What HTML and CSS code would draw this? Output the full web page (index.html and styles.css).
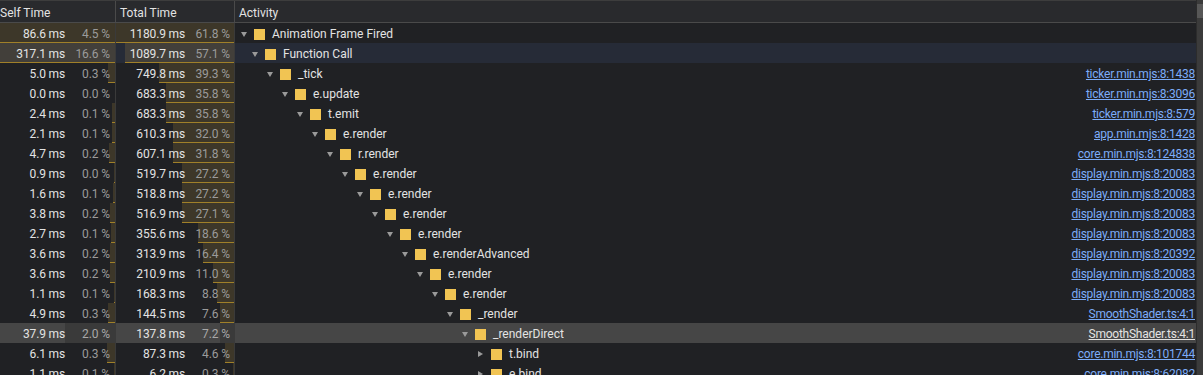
FILE: index.html
```html
<!DOCTYPE html>
<html lang="en">
<head>
    <meta charset="UTF-8">
    <title>Call Tree</title>
    <link rel="stylesheet" href="styles.css">
</head>
<body>
    <div class="panel">
        <div class="tree">
            <div class="head">
                <div class="hcell self">Self Time</div>
                <div class="hcell total">Total Time</div>
                <div class="hcell activity">Activity</div>
            </div>

            <div class="row">
                <div class="cell self"><span class="bar" style="width:100%"></span><span class="val">86.6 ms</span><span class="pct">4.5 %</span></div>
                <div class="cell total"><span class="bar" style="width:100%"></span><span class="val">1180.9 ms</span><span class="pct">61.8 %</span></div>
                <div class="cell activity" style="padding-left:6px"><span class="tri"></span><span class="swatch"></span><span class="name">Animation Frame Fired</span></div>
            </div>
            <div class="row hover">
                <div class="cell self"><span class="bar" style="width:100%"></span><span class="val">317.1 ms</span><span class="pct">16.6 %</span></div>
                <div class="cell total"><span class="bar" style="width:92.3%"></span><span class="val">1089.7 ms</span><span class="pct">57.1 %</span></div>
                <div class="cell activity" style="padding-left:17px"><span class="tri"></span><span class="swatch"></span><span class="name">Function Call</span></div>
            </div>
            <div class="row">
                <div class="cell self"><span class="bar" style="width:5.8%"></span><span class="val">5.0 ms</span><span class="pct">0.3 %</span></div>
                <div class="cell total"><span class="bar" style="width:63.5%"></span><span class="val">749.8 ms</span><span class="pct">39.3 %</span></div>
                <div class="cell activity" style="padding-left:32px"><span class="tri"></span><span class="swatch"></span><span class="name">_tick</span><a class="src">ticker.min.mjs:8:1438</a></div>
            </div>
            <div class="row">
                <div class="cell self"><span class="bar" style="width:0%"></span><span class="val">0.0 ms</span><span class="pct">0.0 %</span></div>
                <div class="cell total"><span class="bar" style="width:57.9%"></span><span class="val">683.3 ms</span><span class="pct">35.8 %</span></div>
                <div class="cell activity" style="padding-left:47px"><span class="tri"></span><span class="swatch"></span><span class="name">e.update</span><a class="src">ticker.min.mjs:8:3096</a></div>
            </div>
            <div class="row">
                <div class="cell self"><span class="bar" style="width:2.8%"></span><span class="val">2.4 ms</span><span class="pct">0.1 %</span></div>
                <div class="cell total"><span class="bar" style="width:57.9%"></span><span class="val">683.3 ms</span><span class="pct">35.8 %</span></div>
                <div class="cell activity" style="padding-left:62px"><span class="tri"></span><span class="swatch"></span><span class="name">t.emit</span><a class="src">ticker.min.mjs:8:579</a></div>
            </div>
            <div class="row">
                <div class="cell self"><span class="bar" style="width:2.4%"></span><span class="val">2.1 ms</span><span class="pct">0.1 %</span></div>
                <div class="cell total"><span class="bar" style="width:51.7%"></span><span class="val">610.3 ms</span><span class="pct">32.0 %</span></div>
                <div class="cell activity" style="padding-left:77px"><span class="tri"></span><span class="swatch"></span><span class="name">e.render</span><a class="src">app.min.mjs:8:1428</a></div>
            </div>
            <div class="row">
                <div class="cell self"><span class="bar" style="width:5.4%"></span><span class="val">4.7 ms</span><span class="pct">0.2 %</span></div>
                <div class="cell total"><span class="bar" style="width:51.4%"></span><span class="val">607.1 ms</span><span class="pct">31.8 %</span></div>
                <div class="cell activity" style="padding-left:92px"><span class="tri"></span><span class="swatch"></span><span class="name">r.render</span><a class="src">core.min.mjs:8:124838</a></div>
            </div>
            <div class="row">
                <div class="cell self"><span class="bar" style="width:1%"></span><span class="val">0.9 ms</span><span class="pct">0.0 %</span></div>
                <div class="cell total"><span class="bar" style="width:44%"></span><span class="val">519.7 ms</span><span class="pct">27.2 %</span></div>
                <div class="cell activity" style="padding-left:107px"><span class="tri"></span><span class="swatch"></span><span class="name">e.render</span><a class="src">display.min.mjs:8:20083</a></div>
            </div>
            <div class="row">
                <div class="cell self"><span class="bar" style="width:1.8%"></span><span class="val">1.6 ms</span><span class="pct">0.1 %</span></div>
                <div class="cell total"><span class="bar" style="width:43.9%"></span><span class="val">518.8 ms</span><span class="pct">27.2 %</span></div>
                <div class="cell activity" style="padding-left:122px"><span class="tri"></span><span class="swatch"></span><span class="name">e.render</span><a class="src">display.min.mjs:8:20083</a></div>
            </div>
            <div class="row">
                <div class="cell self"><span class="bar" style="width:4.4%"></span><span class="val">3.8 ms</span><span class="pct">0.2 %</span></div>
                <div class="cell total"><span class="bar" style="width:43.8%"></span><span class="val">516.9 ms</span><span class="pct">27.1 %</span></div>
                <div class="cell activity" style="padding-left:137px"><span class="tri"></span><span class="swatch"></span><span class="name">e.render</span><a class="src">display.min.mjs:8:20083</a></div>
            </div>
            <div class="row">
                <div class="cell self"><span class="bar" style="width:3.1%"></span><span class="val">2.7 ms</span><span class="pct">0.1 %</span></div>
                <div class="cell total"><span class="bar" style="width:30.1%"></span><span class="val">355.6 ms</span><span class="pct">18.6 %</span></div>
                <div class="cell activity" style="padding-left:152px"><span class="tri"></span><span class="swatch"></span><span class="name">e.render</span><a class="src">display.min.mjs:8:20083</a></div>
            </div>
            <div class="row">
                <div class="cell self"><span class="bar" style="width:4.2%"></span><span class="val">3.6 ms</span><span class="pct">0.2 %</span></div>
                <div class="cell total"><span class="bar" style="width:26.6%"></span><span class="val">313.9 ms</span><span class="pct">16.4 %</span></div>
                <div class="cell activity" style="padding-left:167px"><span class="tri"></span><span class="swatch"></span><span class="name">e.renderAdvanced</span><a class="src">display.min.mjs:8:20392</a></div>
            </div>
            <div class="row">
                <div class="cell self"><span class="bar" style="width:4.2%"></span><span class="val">3.6 ms</span><span class="pct">0.2 %</span></div>
                <div class="cell total"><span class="bar" style="width:17.9%"></span><span class="val">210.9 ms</span><span class="pct">11.0 %</span></div>
                <div class="cell activity" style="padding-left:182px"><span class="tri"></span><span class="swatch"></span><span class="name">e.render</span><a class="src">display.min.mjs:8:20083</a></div>
            </div>
            <div class="row">
                <div class="cell self"><span class="bar" style="width:1.3%"></span><span class="val">1.1 ms</span><span class="pct">0.1 %</span></div>
                <div class="cell total"><span class="bar" style="width:14.3%"></span><span class="val">168.3 ms</span><span class="pct">8.8 %</span></div>
                <div class="cell activity" style="padding-left:197px"><span class="tri"></span><span class="swatch"></span><span class="name">e.render</span><a class="src">display.min.mjs:8:20083</a></div>
            </div>
            <div class="row">
                <div class="cell self"><span class="bar" style="width:5.7%"></span><span class="val">4.9 ms</span><span class="pct">0.3 %</span></div>
                <div class="cell total"><span class="bar" style="width:12.2%"></span><span class="val">144.5 ms</span><span class="pct">7.6 %</span></div>
                <div class="cell activity" style="padding-left:212px"><span class="tri"></span><span class="swatch"></span><span class="name">_render</span><a class="src">SmoothShader.ts:4:1</a></div>
            </div>
            <div class="row selected">
                <div class="cell self"><span class="bar" style="width:43.8%"></span><span class="val">37.9 ms</span><span class="pct">2.0 %</span></div>
                <div class="cell total"><span class="bar" style="width:11.7%"></span><span class="val">137.8 ms</span><span class="pct">7.2 %</span></div>
                <div class="cell activity" style="padding-left:227px"><span class="tri"></span><span class="swatch"></span><span class="name">_renderDirect</span><a class="src">SmoothShader.ts:4:1</a></div>
            </div>
            <div class="row">
                <div class="cell self"><span class="bar" style="width:7%"></span><span class="val">6.1 ms</span><span class="pct">0.3 %</span></div>
                <div class="cell total"><span class="bar" style="width:7.4%"></span><span class="val">87.3 ms</span><span class="pct">4.6 %</span></div>
                <div class="cell activity" style="padding-left:242px"><span class="tri closed"></span><span class="swatch"></span><span class="name">t.bind</span><a class="src">core.min.mjs:8:101744</a></div>
            </div>
            <div class="row">
                <div class="cell self"><span class="bar" style="width:1.3%"></span><span class="val">1.1 ms</span><span class="pct">0.1 %</span></div>
                <div class="cell total"><span class="bar" style="width:0.5%"></span><span class="val">6.2 ms</span><span class="pct">0.3 %</span></div>
                <div class="cell activity" style="padding-left:242px"><span class="tri closed"></span><span class="swatch"></span><span class="name">e.bind</span><a class="src">core.min.mjs:8:62082</a></div>
            </div>
        </div>
        <div class="scrollbar"><div class="thumb"></div></div>
    </div>
</body>
</html>
```

FILE: styles.css
```css
body {
    margin: 0;
    background: #202124;
    color: #e3e3e3;
    font-family: Roboto, 'Noto Sans', Arial, sans-serif;
    font-size: 12px;
    height: 375px;
    overflow: hidden;
}
.panel {
    display: flex;
    height: 375px;
}
.tree {
    flex: 1;
    min-width: 0;
}
.head {
    display: grid;
    grid-template-columns: 116px 119px 1fr;
    height: 21px;
    background: #292a2d;
    border-top: 1px solid #3d3d3d;
    border-bottom: 1px solid #4a4a4a;
}
.hcell {
    line-height: 21px;
    padding-top: 2px;
    box-sizing: border-box;
    border-right: 1px solid #4a4a4a;
    padding-left: 4px;
    white-space: nowrap;
    overflow: hidden;
}
.hcell.self {
    padding-left: 0;
}
.hcell.activity {
    border-right: none;
}
.row {
    display: grid;
    grid-template-columns: 116px 119px 1fr;
    height: 20px;
}
.row.hover {
    background: #262b37;
}
.row.selected {
    background: #464646;
}
.cell {
    position: relative;
    display: flex;
    align-items: center;
    justify-content: flex-end;
    padding-top: 2px;
    box-sizing: border-box;
    border-right: 1px solid #3a3a3a;
    white-space: nowrap;
    overflow: hidden;
}
.cell .bar {
    position: absolute;
    right: 0;
    top: 0;
    bottom: 0;
    background: rgba(240, 188, 76, 0.14);
    border-bottom: 1px solid #a08029;
    box-sizing: border-box;
}
.row.selected .cell .bar {
    background: rgba(0, 0, 0, 0.16);
    border-bottom: none;
}
.cell .val {
    position: relative;
    letter-spacing: -0.15px;
}
.cell .pct {
    position: relative;
    width: 45px;
    text-align: right;
    padding-right: 5px;
    color: #9b9b9b;
    letter-spacing: -0.1px;
}
.row.selected .cell .pct {
    color: #a8a8a8;
}
.cell.total .pct {
    padding-right: 4px;
}
.cell.activity {
    justify-content: flex-start;
    border-right: none;
}
.tri {
    width: 0;
    height: 0;
    border-left: 3.5px solid transparent;
    border-right: 3.5px solid transparent;
    border-top: 5px solid #9a9a9a;
    margin-right: 7px;
    flex: none;
}
.tri.closed {
    border-top: 3.5px solid transparent;
    border-bottom: 3.5px solid transparent;
    border-left: 5px solid #9a9a9a;
    border-right: none;
    margin-left: 1px;
    margin-right: 8px;
}
.swatch {
    width: 11px;
    height: 11px;
    background: #f1c453;
    margin-right: 7px;
    flex: none;
}
.name {
    flex: 1;
}
.src {
    color: #7cacf8;
    text-decoration: underline;
    letter-spacing: -0.25px;
    padding-right: 1px;
}
.row.selected .src {
    color: #e3e3e3;
}
.scrollbar {
    width: 6px;
    background: #3b3b3b;
    border-left: 1px solid #2c2c2c;
}
.thumb {
    height: 14px;
    margin-top: 4px;
    background: #575757;
}
```
